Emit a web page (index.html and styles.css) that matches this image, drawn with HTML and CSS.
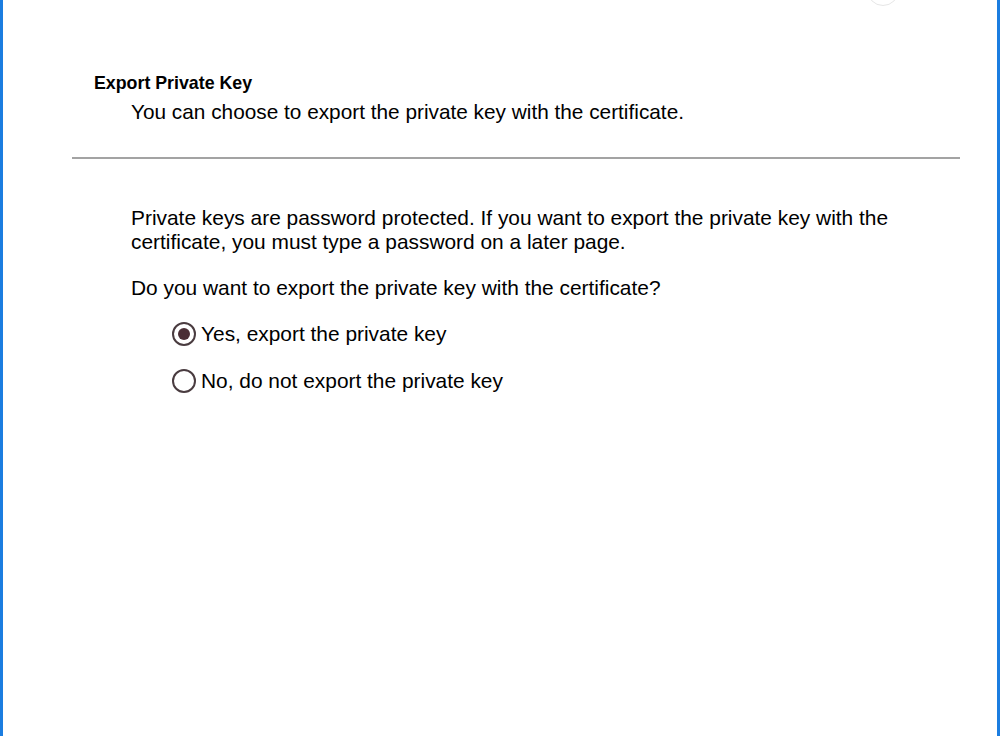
FILE: index.html
```html
<!DOCTYPE html>
<html lang="en">
<head>
  <meta charset="utf-8"/>
  <title>Certificate Export Wizard</title>
  <link rel="stylesheet" href="styles.css">
</head>
<body>
  <div class="wizard">
    <span class="corner-btn"></span>

    <div class="header">
      <h3>Export Private Key</h3>
      <p>You can choose to export the private key with the certificate.</p>
    </div>

    <hr class="divider">

    <div class="content">
      <p class="info">Private keys are password protected. If you want to export the private key with the<br>certificate, you must type a password on a later page.</p>
      <p class="question">Do you want to export the private key with the certificate?</p>

      <div class="options">
        <label class="option">
          <span class="radio checked"></span>
          Yes, export the private key
        </label>
        <label class="option">
          <span class="radio"></span>
          No, do not export the private key
        </label>
      </div>
    </div>
  </div>
</body>
</html>
```

FILE: styles.css
```css
body {
  margin: 0;
  font-family: 'Liberation Sans', Arial, sans-serif;
  color: #000;
  background: #fff;
}

.wizard {
  position: relative;
  height: 736px;
  border-left: 3px solid #1b7de0;
  border-right: 3px solid #1b7de0;
  box-sizing: border-box;
  overflow: hidden;
}

.corner-btn {
  position: absolute;
  top: -26px;
  left: 864px;
  width: 30px;
  height: 30px;
  border: 1px solid #e6e6e6;
  border-radius: 50%;
}

.header {
  padding: 71px 0 0 91px;
}

.header h3 {
  margin: 0;
  font-size: 17.8px;
  font-weight: bold;
  line-height: 24px;
}

.header p {
  margin: 5px 0 0 37px;
  font-size: 20.8px;
  line-height: 24px;
}

.divider {
  margin: 33px 37px 0 69px;
  border: none;
  height: 2px;
  background: #a3a3a3;
}

.content {
  padding: 47px 0 0 128px;
  font-size: 20.9px;
  line-height: 24px;
}

.content p {
  margin: 0;
}

.question {
  margin-top: 22px !important;
}

.options {
  margin-top: 22px;
  padding-left: 41px;
  display: flex;
  flex-direction: column;
  gap: 23px;
}

.option {
  display: flex;
  align-items: center;
  gap: 5px;
}

.radio {
  width: 20px;
  height: 20px;
  border: 2px solid #4a3c40;
  border-radius: 50%;
  display: flex;
  align-items: center;
  justify-content: center;
}

.radio.checked::after {
  content: '';
  width: 12px;
  height: 12px;
  border-radius: 50%;
  background: #4a2e35;
}
```
